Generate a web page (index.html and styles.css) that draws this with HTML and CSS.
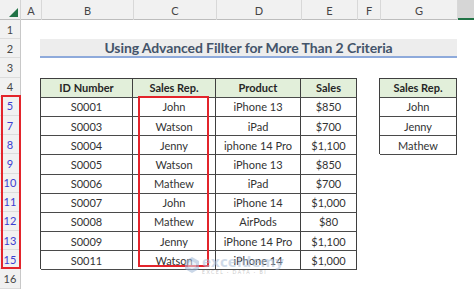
FILE: index.html
```html
<!DOCTYPE html>
<html>
<head>
<meta charset="utf-8">
<link rel="stylesheet" href="styles.css">
</head>
<body>
<div class="sheet">
  <div class="colheads">
    <div class="corner"><svg width="21" height="20" viewBox="0 0 21 20"><polygon points="18,8 18,17 9,17" fill="#217346"/></svg></div>
    <div class="ch">A</div>
    <div class="ch">B</div>
    <div class="ch">C</div>
    <div class="ch">D</div>
    <div class="ch">E</div>
    <div class="ch">F</div>
    <div class="ch">G</div>
    <div class="ch sel"></div>
  </div>
  <div class="body">
    <div class="rowheads">
      <div class="rh">1</div>
      <div class="rh">2</div>
      <div class="rh">3</div>
      <div class="rh">4</div>
      <div class="rh f">5</div>
      <div class="rh f">7</div>
      <div class="rh f">8</div>
      <div class="rh f">9</div>
      <div class="rh f">10</div>
      <div class="rh f">11</div>
      <div class="rh f">12</div>
      <div class="rh f">13</div>
      <div class="rh f">15</div>
      <div class="rh">16</div>
    </div>
    <div class="cells">
      <div class="title">Using Advanced Fillter for More Than 2 Criteria</div>
      <div class="main">
        <div class="c hd">ID Number</div><div class="c hd">Sales Rep.</div><div class="c hd">Product</div><div class="c hd">Sales</div>
        <div class="c">S0001</div><div class="c">John</div><div class="c">iPhone 13</div><div class="c">$850</div>
        <div class="c">S0003</div><div class="c">Watson</div><div class="c">iPad</div><div class="c">$700</div>
        <div class="c">S0004</div><div class="c">Jenny</div><div class="c">iphone 14 Pro</div><div class="c">$1,100</div>
        <div class="c">S0005</div><div class="c">Watson</div><div class="c">iPhone 13</div><div class="c">$850</div>
        <div class="c">S0006</div><div class="c">Mathew</div><div class="c">iPad</div><div class="c">$700</div>
        <div class="c">S0007</div><div class="c">John</div><div class="c">iPhone 14</div><div class="c">$1,000</div>
        <div class="c">S0008</div><div class="c">Mathew</div><div class="c">AirPods</div><div class="c">$80</div>
        <div class="c">S0009</div><div class="c">Jenny</div><div class="c">iPhone 14 Pro</div><div class="c">$1,100</div>
        <div class="c">S0011</div><div class="c">Watson</div><div class="c">iPhone 14</div><div class="c">$1,000</div>
      </div>
      <div class="crit">
        <div class="c hd">Sales Rep.</div>
        <div class="c">John</div>
        <div class="c">Jenny</div>
        <div class="c">Mathew</div>
      </div>
    </div>
  </div>
  <div class="redbox rows-box"></div>
  <div class="redbox col-box"></div>
  <div class="watermark">
    <svg class="wm-logo" width="16" height="18" viewBox="0 0 16 18"><polygon points="8,1 15,5 15,13 8,17 1,13 1,5" fill="#9fb7d6"/><polygon points="8,5 12,7.5 12,11 8,13 4,11 4,7" fill="#dfe8f3"/></svg>
    <div class="wm-text">
      <div class="wm-name">exceldemy</div>
      <div class="wm-sub">EXCEL · DATA · BI</div>
    </div>
  </div>
</div>
</body>
</html>
```

FILE: styles.css
```css
html, body {
  margin: 0;
  padding: 0;
  background: #ffffff;
}
.sheet {
  position: relative;
  width: 474px;
  height: 289px;
  overflow: hidden;
  font-family: Lato, "Liberation Sans", sans-serif;
  font-size: 11px;
  color: #333333;
}
.colheads {
  display: grid;
  grid-template-columns: 21px 21px 92px 83px 85px 56px 23px 77px 1fr;
  height: 20px;
  background: #f1f1f1;
  border-bottom: 1px solid #bdbdbd;
  box-sizing: border-box;
}
.corner {
  border-right: 1px solid #d4d4d4;
}
.corner svg { display: block; }
.ch {
  display: flex;
  align-items: center;
  justify-content: center;
  border-right: 1px solid #d8d8d8;
  color: #454545;
  font-size: 11px;
}
.ch.sel {
  background: #d6d6d6;
  border-bottom: 2px solid #217346;
  border-right: none;
}
.body {
  display: flex;
}
.rowheads {
  width: 21px;
  display: grid;
  grid-template-rows: repeat(14, 19.2px);
  background: #f1f1f1;
  border-right: 1px solid #c8c8c8;
  box-sizing: border-box;
}
.rh {
  display: flex;
  align-items: center;
  justify-content: center;
  border-bottom: 1px solid #dcdcdc;
  color: #454545;
  font-size: 11px;
}
.rh.f {
  color: #3d3dd0;
}
.cells {
  flex: 1;
  display: grid;
  grid-template-columns: 20px 92px 83px 85px 56px 23px 77px 1fr;
  grid-template-rows: repeat(14, 19.2px);
  grid-template-areas:
    ". . . . . . . ."
    ". title title title title title title ."
    ". . . . . . . ."
    ". main main main main . crit ."
    ". main main main main . crit ."
    ". main main main main . crit ."
    ". main main main main . crit ."
    ". main main main main . . ."
    ". main main main main . . ."
    ". main main main main . . ."
    ". main main main main . . ."
    ". main main main main . . ."
    ". main main main main . . ."
    ". . . . . . . .";
}
.title {
  grid-area: title;
  background: #ededed;
  border-bottom: 2px solid #8eaadb;
  display: flex;
  align-items: center;
  justify-content: center;
  font-weight: 700;
  font-size: 14px;
  letter-spacing: -0.1px;
  color: #44546a;
  margin-left: -1px;
}
.main {
  grid-area: main;
  display: grid;
  grid-template-columns: 92px 83px 85px 56px;
  grid-template-rows: repeat(10, 19.2px);
  margin-left: -1px;
  border-left: 1px solid #3f3f3f;
  border-top: 1px solid #3f3f3f;
}
.crit {
  grid-area: crit;
  display: grid;
  grid-template-rows: repeat(4, 19.2px);
  border-left: 1px solid #3f3f3f;
  border-top: 1px solid #3f3f3f;
  margin-left: -1px;
}
.c {
  display: flex;
  align-items: center;
  justify-content: center;
  border-right: 1px solid #3f3f3f;
  border-bottom: 1px solid #4a4a4a;
  box-sizing: border-box;
  color: #333333;
  font-size: 11px;
  white-space: nowrap;
}
.c.hd {
  background: #e2efda;
  font-weight: 700;
  color: #262626;
}
.redbox {
  position: absolute;
  border: 2px solid #e3242b;
  box-sizing: border-box;
}
.rows-box {
  left: 1px;
  top: 95px;
  width: 20px;
  height: 174px;
}
.col-box {
  left: 138px;
  top: 96px;
  width: 71px;
  height: 171px;
}
.watermark {
  position: absolute;
  left: 184px;
  top: 254px;
  display: flex;
  align-items: center;
  gap: 2px;
  opacity: 0.55;
}
.wm-logo { display: block; }
.wm-text {
  display: flex;
  flex-direction: column;
  line-height: 1;
}
.wm-name {
  font-family: "Open Sans", sans-serif;
  font-weight: 700;
  font-size: 15px;
  color: #a8bcd6;
  letter-spacing: 0.2px;
}
.wm-sub {
  font-size: 5px;
  color: #a0a0a0;
  letter-spacing: 1.5px;
  margin-top: 1px;
}
```
